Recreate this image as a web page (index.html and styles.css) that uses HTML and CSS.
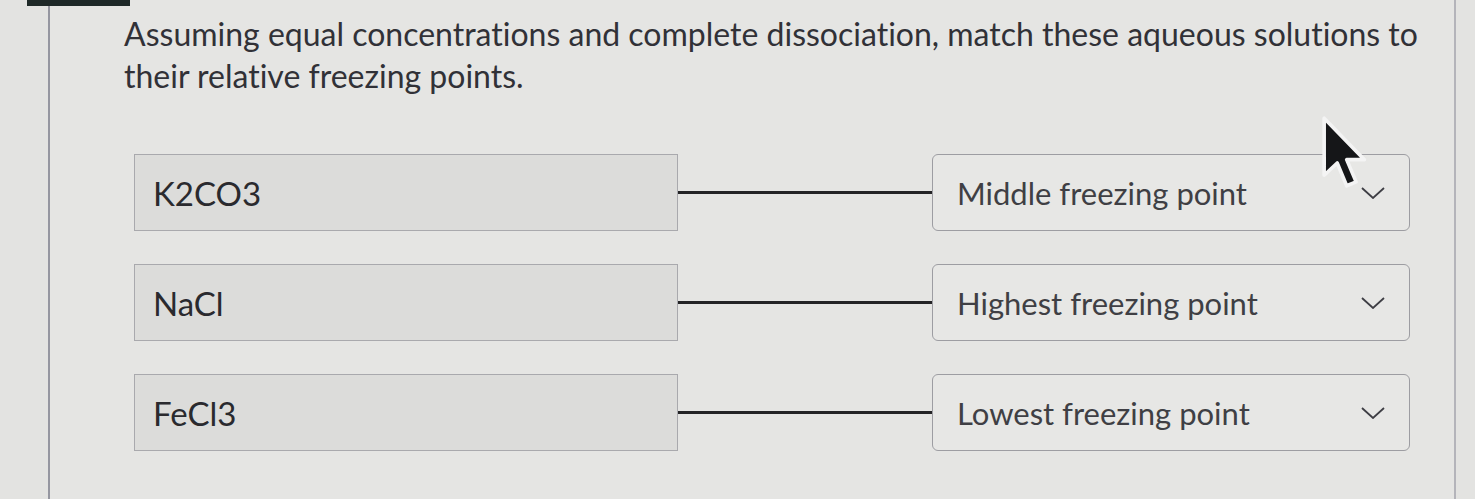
FILE: index.html
```html
<!DOCTYPE html>
<html>
<head>
<title>Matching</title>
<link rel="stylesheet" href="styles.css">
</head>
<body>
<div class="screen">
    <div class="tab-mark"></div>
    <div class="card">
        <p class="question">Assuming equal concentrations and complete dissociation, match these aqueous solutions to their relative freezing points.</p>

        <div class="pairs">
            <div class="item">K2CO3</div>
            <div class="link"></div>
            <div class="choice">
                <span>Middle freezing point</span>
                <svg class="chevron" viewBox="0 0 24 12"><path d="M1 1 L12 11 L23 1" /></svg>
            </div>

            <div class="item">NaCl</div>
            <div class="link"></div>
            <div class="choice">
                <span>Highest freezing point</span>
                <svg class="chevron" viewBox="0 0 24 12"><path d="M1 1 L12 11 L23 1" /></svg>
            </div>

            <div class="item">FeCl3</div>
            <div class="link"></div>
            <div class="choice">
                <span>Lowest freezing point</span>
                <svg class="chevron" viewBox="0 0 24 12"><path d="M1 1 L12 11 L23 1" /></svg>
            </div>
        </div>
    </div>

    <svg class="pointer" viewBox="0 0 18 28">
        <path d="M1.5 1.5 L1.5 22 L6.2 17.6 L9.6 25.8 L13 24.4 L9.6 16.4 L16 16.4 Z" />
    </svg>
</div>
</body>
</html>
```

FILE: styles.css
```css
body {
    margin: 0;
    font-family: Lato, "Open Sans", sans-serif;
    font-variant-ligatures: no-common-ligatures;
    background-color: #e3e3e1;
}

.screen {
    position: relative;
    width: 1475px;
    height: 499px;
    overflow: hidden;
}

.tab-mark {
    position: absolute;
    left: 27px;
    top: 0;
    width: 103px;
    height: 6px;
    background-color: #1f2928;
}

.card {
    margin-left: 48px;
    width: 1404px;
    height: 499px;
    border-left: 2px solid #9596a0;
    border-right: 2px solid #b4b4ba;
    background-color: #e5e5e3;
}

.question {
    margin: 0;
    padding: 13px 0 0 74px;
    width: 1320px;
    font-size: 32px;
    line-height: 42px;
    color: #313137;
}

.pairs {
    display: grid;
    grid-template-columns: 544px 254px 478px;
    row-gap: 33px;
    align-items: center;
    margin-top: 57px;
    padding-left: 84px;
}

.item {
    height: 75px;
    display: flex;
    align-items: center;
    padding-left: 18px;
    font-size: 33px;
    color: #2a2a2e;
    background-color: #dcdcda;
    border: 1px solid #a9a9ad;
}

.link {
    height: 3px;
    background-color: #232325;
}

.choice {
    height: 75px;
    display: flex;
    align-items: center;
    justify-content: space-between;
    padding: 0 24px;
    font-size: 31px;
    color: #3f3f44;
    background-color: #e7e7e5;
    border: 1px solid #9d9da2;
    border-radius: 6px;
}

.chevron {
    width: 24px;
    height: 12px;
    fill: none;
    stroke: #3e3e44;
    stroke-width: 1.8;
}

.pointer {
    position: absolute;
    left: 1320px;
    top: 114px;
    width: 50px;
    height: 78px;
    fill: #151618;
    stroke: #f4f4f4;
    stroke-width: 1.3;
    stroke-linejoin: round;
}
```
